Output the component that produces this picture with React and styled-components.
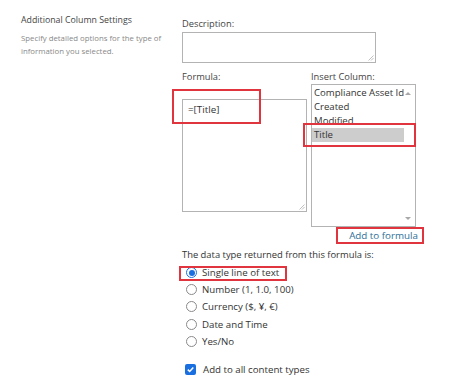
import React from "react";
import styled, { createGlobalStyle } from "styled-components";

const GlobalStyle = createGlobalStyle`
  body {
    margin: 0;
    background: #fff;
    font-family: "Open Sans", "Noto Sans", sans-serif;
    color: #333;
  }
`;

const Page = styled.div`
  display: grid;
  grid-template-columns: 182px 1fr;
  width: 474px;
  height: 384px;
  overflow: hidden;
`;

const Side = styled.div`
  padding: 13px 0 0 21px;
`;

const SideTitle = styled.div`
  font-size: 8.8px;
  color: #444;
  line-height: 15px;
`;

const SideText = styled.div`
  margin-top: 4px;
  font-size: 7.8px;
  line-height: 13px;
  color: #888;
`;

const Main = styled.div`
  padding-top: 16px;
`;

const Label = styled.div`
  font-size: 9.3px;
  line-height: ${(p) => p.lh || 16}px;
  color: #444;
`;

const Box = styled.div`
  position: relative;
  box-sizing: border-box;
  border: 1px solid #b3b3b3;
  width: ${(p) => p.w}px;
  height: ${(p) => p.h}px;
  margin-top: ${(p) => p.mt || 0}px;
  background: #fff;
`;

const Grip = styled.svg`
  position: absolute;
  right: 1px;
  bottom: 1px;
`;

const Columns = styled.div`
  display: flex;
  gap: 4px;
  margin-top: 7px;
`;

const Col = styled.div`
  position: relative;
  display: flex;
  flex-direction: column;
`;

const FormulaText = styled.div`
  padding: 3px 0 0 5px;
  font-size: 9.8px;
  line-height: 14px;
  color: #333;
`;

const Items = styled.div`
  padding-top: 1px;
`;

const Item = styled.div`
  font-size: 9.6px;
  line-height: 14px;
  padding-left: 2px;
  width: 90px;
  color: #333;
  background: ${(p) => (p.selected ? "#cdcdcd" : "transparent")};
  white-space: nowrap;
`;

const Arrow = styled.div`
  position: absolute;
  right: 4px;
  ${(p) => (p.down ? "bottom: 6px;" : "top: 7px;")}
  width: 0;
  height: 0;
  border-left: 3px solid transparent;
  border-right: 3px solid transparent;
  ${(p) =>
    p.down ? "border-top: 3px solid #a8a8a8;" : "border-bottom: 3px solid #a8a8a8;"}
`;

const Mark = styled.div`
  position: absolute;
  box-sizing: border-box;
  border: 2px solid #e0343f;
  left: ${(p) => p.x}px;
  top: ${(p) => p.y}px;
  width: ${(p) => p.w}px;
  height: ${(p) => p.h}px;
`;

const LinkRow = styled.div`
  display: flex;
  justify-content: flex-end;
  width: 107px;
  margin-top: 2px;
`;

const Link = styled.a`
  font-size: 9.8px;
  line-height: 14px;
  color: #2f6f99;
  text-decoration: none;
`;

const Question = styled.div`
  margin-top: 4px;
  font-size: 9.4px;
  line-height: 16px;
  color: #333;
`;

const Options = styled.div`
  position: relative;
  display: flex;
  flex-direction: column;
  margin-top: 1px;
`;

const Option = styled.label`
  display: flex;
  align-items: center;
  gap: 5px;
  height: 17.2px;
  padding-left: 4px;
  font-size: 9.7px;
  color: #333;
`;

const Radio = styled.span`
  box-sizing: border-box;
  width: 11px;
  height: 11px;
  border-radius: 50%;
  border: 1px solid ${(p) => (p.checked ? "#1a6fe0" : "#8a8a8a")};
  display: flex;
  align-items: center;
  justify-content: center;
  &::after {
    content: "";
    width: 6px;
    height: 6px;
    border-radius: 50%;
    background: ${(p) => (p.checked ? "#1a6fe0" : "transparent")};
  }
`;

const CheckRow = styled(Option)`
  margin-top: 11px;
  padding-left: 3px;
  gap: 7px;
`;

const Check = styled.span`
  width: 11px;
  height: 11px;
  border-radius: 2px;
  background: #1a6fe0;
  display: flex;
  align-items: center;
  justify-content: center;
`;

const ResizeGrip = () => (
  <Grip width="7" height="7" viewBox="0 0 7 7">
    <path d="M6.5 1.5 L1.5 6.5 M6.5 4 L4 6.5" stroke="#b0b0b0" strokeWidth="0.8" />
  </Grip>
);

const types = [
  "Single line of text",
  "Number (1, 1.0, 100)",
  "Currency ($, ¥, €)",
  "Date and Time",
  "Yes/No",
];

const columns = ["Compliance Asset Id", "Created", "Modified", "Title"];

export default function App() {
  return (
    <>
      <GlobalStyle />
      <Page>
        <Side>
          <SideTitle>Additional Column Settings</SideTitle>
          <SideText>
            Specify detailed options for the type of
            <br />
            information you selected.
          </SideText>
        </Side>
        <Main>
          <Label>Description:</Label>
          <Box w={194} h={31}>
            <ResizeGrip />
          </Box>
          <Columns>
            <Col>
              <Label lh={14}>Formula:</Label>
              <Box w={125} h={113} mt={15}>
                <FormulaText>=[Title]</FormulaText>
                <ResizeGrip />
              </Box>
              <Mark x={-10} y={19} w={89} h={35} />
            </Col>
            <Col>
              <Label lh={14}>Insert Column:</Label>
              <Box w={105} h={143}>
                <Items>
                  {columns.map((c) => (
                    <Item key={c} selected={c === "Title"}>
                      {c}
                    </Item>
                  ))}
                </Items>
                <Arrow />
                <Arrow down />
              </Box>
              <Mark x={-8} y={53} w={113} h={24} />
              <LinkRow>
                <Link href="#">Add to formula</Link>
              </LinkRow>
              <Mark x={25} y={157} w={88} h={17} />
            </Col>
          </Columns>
          <Question>The data type returned from this formula is:</Question>
          <Options>
            {types.map((t, i) => (
              <Option key={t}>
                <Radio checked={i === 0} />
                {t}
              </Option>
            ))}
            <Mark x={-3} y={2} w={108} h={15} />
          </Options>
          <CheckRow>
            <Check>
              <svg width="9" height="9" viewBox="0 0 9 9">
                <path d="M1.8 4.6 L3.7 6.5 L7.3 2.5" fill="none" stroke="#fff" strokeWidth="1.5" />
              </svg>
            </Check>
            Add to all content types
          </CheckRow>
        </Main>
      </Page>
    </>
  );
}
